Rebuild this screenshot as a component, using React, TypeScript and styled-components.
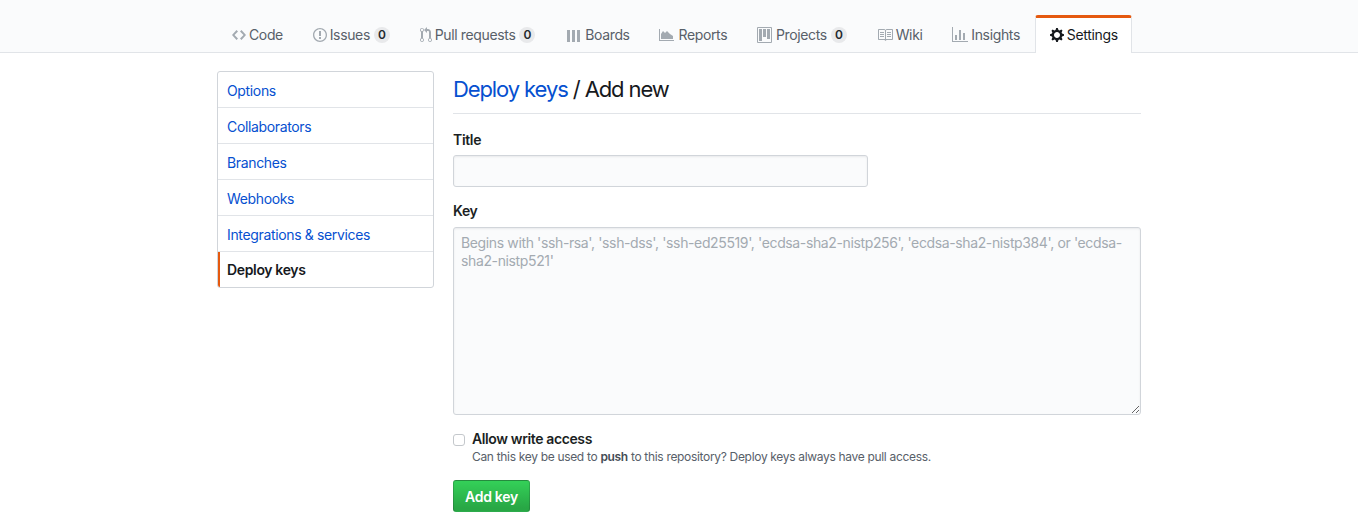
import React from "react";
import styled, { createGlobalStyle } from "styled-components";

const Global = createGlobalStyle`
  html, body { margin: 0; padding: 0; background: #fff; }
  body {
    font-family: Inter, "Liberation Sans", sans-serif;
    font-size: 14px;
    color: #1b1f23;
    overflow: hidden;
  }
  * { box-sizing: border-box; }
`;

const Page = styled.div`
  width: 1358px;
  height: 530px;
  overflow: hidden;
`;

const Header = styled.header`
  height: 53px;
  padding-top: 15px;
  background: #fafbfc;
  border-bottom: 1px solid #e1e4e8;
`;

const Wrap = styled.div`
  width: 924px;
  margin: 0 0 0 217px;
`;

const TabList = styled(Wrap)`
  display: flex;
  height: 38px;
`;

const Tab = styled.a`
  display: flex;
  align-items: center;
  height: 38px;
  padding: 1px 14.8px 0 15px;
  color: #586069;
  font-size: 14px;
  letter-spacing: -0.36px;
  white-space: nowrap;
`;

const ActiveTab = styled(Tab)`
  padding: 0 13px 2px 14px;
  letter-spacing: -0.3px;
  color: #16191d;
  background: #fff;
  border: 1px solid #e1e4e8;
  border-top: 3px solid #e5590f;
  border-bottom: 0;
  border-radius: 3px 3px 0 0;
`;

const TabIcon = styled.svg<{ $dark?: boolean }>`
  width: auto;
  height: 16px;
  margin-right: 3px;
  fill: ${(p) => (p.$dark ? "#16191d" : "#a3aab1")};
  flex: none;
`;

const Counter = styled.span`
  display: inline-block;
  margin-left: 4px;
  padding: 2px 4px;
  min-width: 16px;
  text-align: center;
  font-size: 12px;
  font-weight: 600;
  line-height: 12px;
  letter-spacing: 0;
  color: #24292e;
  background: rgba(27, 31, 35, 0.08);
  border-radius: 20px;
`;

const Main = styled(Wrap)`
  display: flex;
  gap: 19px;
  padding-top: 18px;
`;

const Side = styled.nav`
  flex: none;
  align-self: flex-start;
  width: 217px;
  background: #fff;
  border: 1px solid #d1d5da;
  border-radius: 3px;
  overflow: hidden;
`;

const SideItem = styled.a<{ $active?: boolean }>`
  display: block;
  height: 36px;
  padding: 1px 9px 0;
  line-height: 35px;
  font-size: 14px;
  letter-spacing: -0.35px;
  color: ${(p) => (p.$active ? "#16191d" : "#0650d0")};
  font-weight: ${(p) => (p.$active ? 600 : 400)};
  border-bottom: 1px solid #e1e4e8;
  box-shadow: ${(p) => (p.$active ? "inset 2px 0 0 #e5590f" : "none")};
  &:last-child { border-bottom: 0; height: 35px; line-height: 33px; }
`;

const Content = styled.main`
  flex: 1;
  min-width: 0;
`;

const Heading = styled.h1`
  margin: 0 0 16px;
  height: 43px;
  padding-top: 2px;
  font-size: 22px;
  line-height: 32px;
  font-weight: 400;
  letter-spacing: -1.1px;
  color: #16191d;
  border-bottom: 1px solid #e1e4e8;
`;

const HeadingLink = styled.a`
  color: #0650d0;
`;

const Label = styled.label<{ $gap: number }>`
  display: block;
  height: 20px;
  margin-bottom: ${(p) => p.$gap}px;
  font-size: 14px;
  line-height: 20px;
  font-weight: 600;
  letter-spacing: -0.35px;
`;

const Input = styled.input`
  display: block;
  width: 415px;
  height: 32px;
  margin-bottom: 14px;
  background: #fafbfc;
  border: 1px solid #d1d5da;
  border-radius: 3px;
  box-shadow: inset 0 1px 2px rgba(27, 31, 35, 0.075);
  outline: none;
`;

const TextArea = styled.textarea`
  display: block;
  width: 688px;
  height: 188px;
  padding: 6px 7px;
  margin: 0 0 14px;
  background: #fafbfc;
  border: 1px solid #d1d5da;
  border-radius: 3px;
  box-shadow: inset 0 1px 2px rgba(27, 31, 35, 0.075);
  font-family: inherit;
  font-size: 14px;
  line-height: 18px;
  letter-spacing: -0.37px;
  outline: none;
  &::placeholder { color: #a3aab1; opacity: 1; }
`;

const CheckRow = styled.div`
  display: flex;
  gap: 7px;
`;

const Check = styled.input`
  flex: none;
  width: 12px;
  height: 12px;
  margin: 5px 0 0;
  appearance: none;
  background: #fff;
  border: 1px solid #c4c8cc;
  border-radius: 3px;
`;

const CheckTitle = styled.div`
  height: 20px;
  font-size: 14px;
  line-height: 20px;
  font-weight: 600;
  letter-spacing: -0.38px;
`;

const Note = styled.p`
  margin: 0;
  height: 16px;
  font-size: 12px;
  line-height: 16px;
  letter-spacing: -0.32px;
  color: #586069;
  white-space: nowrap;
`;

const Strong = styled.strong`
  font-weight: 600;
  color: #444d56;
`;

const Submit = styled.button`
  display: block;
  width: 77px;
  height: 32px;
  margin-top: 15px;
  padding: 0;
  color: #fff;
  font-family: inherit;
  font-size: 14px;
  font-weight: 600;
  letter-spacing: -0.3px;
  background: linear-gradient(-180deg, #34d058 0%, #28a745 90%);
  border: 1px solid rgba(27, 31, 35, 0.2);
  border-radius: 3px;
`;

const icons: Record<string, { w: number; d: string }> = {
  code: { w: 14, d: "M9.5 3L8 4.5 11.5 8 8 11.5 9.5 13 14 8 9.5 3zm-5 0L0 8l4.5 5L6 11.5 2.5 8 6 4.5 4.5 3z" },
  issue: { w: 14, d: "M7 2.3c3.14 0 5.7 2.56 5.7 5.7s-2.56 5.7-5.7 5.7A5.71 5.71 0 0 1 1.3 8c0-3.14 2.56-5.7 5.7-5.7zM7 1C3.14 1 0 4.14 0 8s3.14 7 7 7 7-3.14 7-7-3.14-7-7-7zm1 3H6v5h2V4zm0 6H6v2h2v-2z" },
  pr: { w: 12, d: "M11 11.28V5c-.03-.78-.34-1.47-.94-2.06C9.46 2.35 8.78 2.03 8 2H7V0L4 3l3 3V4h1c.27.02.48.11.69.31.21.2.3.42.31.69v6.28A1.993 1.993 0 0 0 10 15a1.993 1.993 0 0 0 1-3.72zm-1 2.92c-.66 0-1.2-.55-1.2-1.2 0-.65.55-1.2 1.2-1.2.65 0 1.2.55 1.2 1.2 0 .65-.55 1.2-1.2 1.2zM4 3c0-1.11-.89-2-2-2a1.993 1.993 0 0 0-1 3.72v6.56A1.993 1.993 0 0 0 2 15a1.993 1.993 0 0 0 1-3.72V4.72c.59-.34 1-.98 1-1.72zm-.8 10c0 .66-.55 1.2-1.2 1.2-.65 0-1.2-.55-1.2-1.2 0-.65.55-1.2 1.2-1.2.65 0 1.2.55 1.2 1.2zM2 4.2C1.34 4.2.8 3.65.8 3c0-.65.55-1.2 1.2-1.2.65 0 1.2.55 1.2 1.2 0 .65-.55 1.2-1.2 1.2z" },
  boards: { w: 17, d: "M2 3h3v12H2V3zm5 0h3v12H7V3zm5 0h3v12h-3V3z" },
  reports: { w: 16, d: "M0 2h1v11h14v1H0V2zm2 10V7l2-3 2 2 2-2 3 3 3 2v3H2z" },
  project: { w: 16, d: "M10 12h3V2h-3v10zm-4-2h3V2H6v8zm-4 4h3V2H2v12zm-1 1h13V1H1v14zM14 0H1a1 1 0 0 0-1 1v14a1 1 0 0 0 1 1h13a1 1 0 0 0 1-1V1a1 1 0 0 0-1-1z" },
  wiki: { w: 16, d: "M3 5h4v1H3V5zm0 3h4V7H3v1zm0 2h4V9H3v1zm11-5h-4v1h4V5zm0 2h-4v1h4V7zm0 2h-4v1h4V9zm2-6v9c0 .55-.45 1-1 1H9.5l-1 1-1-1H2c-.55 0-1-.45-1-1V3c0-.55.45-1 1-1h5.5l1 1 1-1H15c.55 0 1 .45 1 1zm-8 .5L7.5 3H2v9h6V3.5zm7-.5H9.5l-.5.5V12h6V3z" },
  graph: { w: 16, d: "M16 14v1H0V0h1v14h15zM5 13H3V8h2v5zm4 0H7V3h2v10zm4 0h-2V6h2v7z" },
  gear: { w: 14, d: "M14 8.77v-1.6l-1.94-.64-.45-1.09.88-1.84-1.13-1.13-1.81.91-1.09-.45-.69-1.92h-1.6l-.63 1.94-1.11.45-1.84-.88-1.13 1.13.91 1.81-.45 1.09L0 7.23v1.59l1.94.64.45 1.09-.88 1.84 1.13 1.13 1.81-.91 1.09.45.69 1.92h1.59l.63-1.94 1.11-.45 1.84.88 1.13-1.13-.92-1.81.47-1.09L14 8.75v.02zM7 11c-1.66 0-3-1.34-3-3s1.34-3 3-3 3 1.34 3 3-1.34 3-3 3z" },
};

const Icon = ({ name, dark }: { name: string; dark?: boolean }) => {
  const i = icons[name];
  return (
    <TabIcon $dark={dark} viewBox={`0 0 ${i.w} 16`} width={i.w} height={16}>
      <path fillRule="evenodd" d={i.d} />
    </TabIcon>
  );
};

const tabs = [
  { icon: "code", label: "Code" },
  { icon: "issue", label: "Issues", count: 0 },
  { icon: "pr", label: "Pull requests", count: 0 },
  { icon: "boards", label: "Boards" },
  { icon: "reports", label: "Reports" },
  { icon: "project", label: "Projects", count: 0 },
  { icon: "wiki", label: "Wiki" },
  { icon: "graph", label: "Insights" },
];

const sideItems = ["Options", "Collaborators", "Branches", "Webhooks", "Integrations & services"];

export default function App() {
  return (
    <Page>
      <Global />
      <Header>
        <TabList as="nav">
          {tabs.map((t) => (
            <Tab key={t.label}>
              <Icon name={t.icon} />
              {t.label}
              {t.count !== undefined && <Counter>{t.count}</Counter>}
            </Tab>
          ))}
          <ActiveTab>
            <Icon name="gear" dark />
            Settings
          </ActiveTab>
        </TabList>
      </Header>
      <Main>
        <Side>
          {sideItems.map((s) => (
            <SideItem key={s}>{s}</SideItem>
          ))}
          <SideItem $active>Deploy keys</SideItem>
        </Side>
        <Content>
          <Heading>
            <HeadingLink>Deploy keys</HeadingLink> / Add new
          </Heading>
          <Label $gap={5}>Title</Label>
          <Input />
          <Label $gap={6}>Key</Label>
          <TextArea placeholder="Begins with 'ssh-rsa', 'ssh-dss', 'ssh-ed25519', 'ecdsa-sha2-nistp256', 'ecdsa-sha2-nistp384', or 'ecdsa-sha2-nistp521'" />
          <CheckRow>
            <Check type="checkbox" />
            <div>
              <CheckTitle>Allow write access</CheckTitle>
              <Note>
                Can this key be used to <Strong>push</Strong> to this repository? Deploy keys always have pull access.
              </Note>
            </div>
          </CheckRow>
          <Submit>Add key</Submit>
        </Content>
      </Main>
    </Page>
  );
}
